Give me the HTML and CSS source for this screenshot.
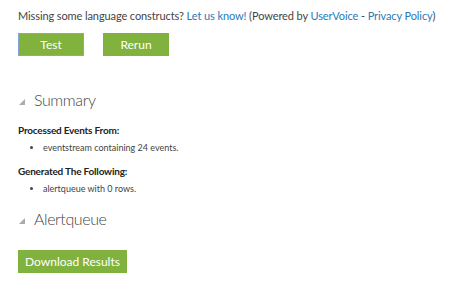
FILE: index.html
```html
<!DOCTYPE html>
<html lang="en">

<head>
  <meta charset="UTF-8" />
  <title>Query Test</title>
  <link rel="stylesheet" href="styles.css">
</head>

<body>
  <div class="page">

    <!-- feedback line -->
    <p class="notice">
      Missing some language constructs? <a href="#">Let us know!</a> (Powered by <a href="#">UserVoice</a> - <a href="#">Privacy Policy</a>)
    </p>

    <div class="actions">
      <button class="btn btn-focus">Test</button>
      <button class="btn">Rerun</button>
    </div>

    <!-- summary -->
    <h2 class="section-title"><span class="arrow"></span>Summary</h2>
    <div class="summary">
      <h4>Processed Events From:</h4>
      <ul>
        <li>eventstream containing 24 events.</li>
      </ul>
      <h4>Generated The Following:</h4>
      <ul>
        <li>alertqueue with 0 rows.</li>
      </ul>
    </div>

    <h2 class="section-title"><span class="arrow"></span>Alertqueue</h2>
    <button class="btn btn-wide">Download Results</button>

  </div>
</body>

</html>
```

FILE: styles.css
```css
* {
  margin: 0;
  padding: 0;
}

body {
  background: #fff;
  font-family: Lato, "Open Sans", sans-serif;
  color: #333;
}

.page {
  padding: 8px 18px;
}

.notice {
  font-size: 11px;
  letter-spacing: -0.1px;
  line-height: 16px;
  color: #444;
  white-space: nowrap;
}

.notice a {
  color: #2a7ab8;
  text-decoration: none;
}

.actions {
  display: flex;
  gap: 19px;
  margin-top: 9px;
}

.btn {
  width: 66px;
  height: 23px;
  border: 1px solid #80b23d;
  background: #80b23d;
  color: #fff;
  font: 12px Lato, sans-serif;
  cursor: pointer;
}

.btn-focus {
  border-color: #7fa6d8;
}

.btn-wide {
  width: auto;
  padding: 0 6px;
}

.section-title {
  display: flex;
  align-items: center;
  font-size: 16px;
  letter-spacing: -0.4px;
  font-weight: 300;
  color: #444;
  line-height: 20px;
}

.actions + .section-title {
  margin-top: 34px;
}

.arrow {
  width: 0;
  height: 0;
  border-left: 6px solid transparent;
  border-bottom: 6px solid #aaa;
  margin: 3px 9px 0 1px;
}

.summary {
  margin-top: 13px;
}

.summary h4 {
  font-size: 10px;
  letter-spacing: -0.2px;
  font-weight: 700;
  color: #222;
  line-height: 14px;
}

.summary ul {
  list-style: disc;
  padding-left: 25px;
  margin: 4px 0 9px;
  font-size: 9px;
  line-height: 14px;
  color: #444;
}

.summary ul:last-child {
  margin-bottom: 13px;
}

.section-title + .btn {
  margin-top: 21px;
}
```
